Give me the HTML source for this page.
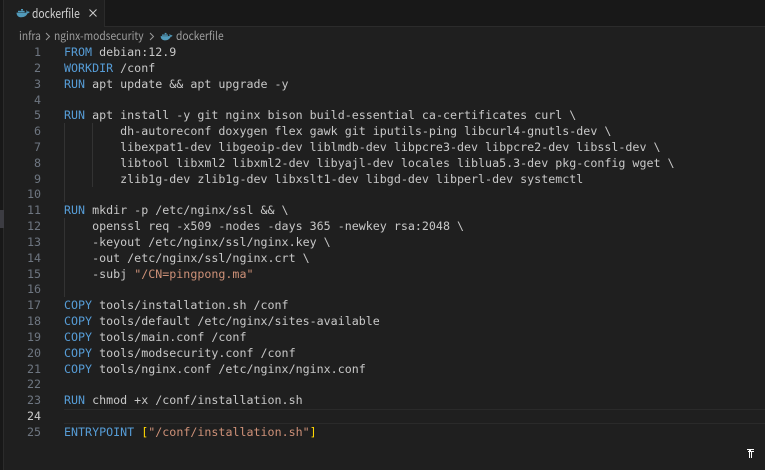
<!DOCTYPE html>
<html><head><meta charset="utf-8"><style>
html,body{margin:0;padding:0;width:765px;height:470px;overflow:hidden;background:#1f1f1f}
*{box-sizing:border-box}
#tabbar{position:absolute;left:0;top:0;width:765px;height:27px;background:#181818;border-bottom:1px solid #2b2b2b}
#tab{position:absolute;left:4px;top:0;width:101px;height:27px;background:#1f1f1f;border-right:1px solid #2b2b2b}
#strip{position:absolute;left:0;top:0;width:4px;height:470px;background:#181818;border-right:1px solid #2b2b2b}
#thumb{position:absolute;left:0;top:210px;width:4px;height:18px;background:#3c3c42}
.ui{position:absolute;font-family:"Noto Sans CJK JP","Liberation Sans",sans-serif;white-space:pre;transform-origin:0 0;filter:blur(.3px)}
#tabt{left:32px;top:4px;font-size:12.4px;line-height:18px;color:#d0d0d0;transform:scaleX(.83)}
.bc{top:27px;font-size:11.4px;line-height:18px;color:#9d9d9d;transform:scaleX(.9)}
.ln,.c{position:absolute;font-family:"DejaVu Sans Mono",monospace;font-size:11.66px;line-height:16px;height:16px;white-space:pre;color:#c8c8c8;filter:blur(.25px)}
.ln{left:19px;width:22px;text-align:right;color:#6e7681}
.c{left:64px}
.k{color:#569cd6}.s{color:#ce9178}.b{color:#ffd700}
.g{position:absolute;width:1px;background:#333}
#cur{position:absolute;left:64px;top:409px;width:701px;height:15px;border-top:1px solid #2a2a2a;border-bottom:1px solid #2a2a2a}
</style></head><body>
<div id="tabbar"></div><div id="tab"></div>
<div id="strip"></div><div id="thumb"></div>

<svg style="position:absolute;left:16px;top:8px" width="14" height="10" viewBox="0 0 14 10"><path d="M0.5 4.6H10.2C10.6 3.9 10.6 3 10 2.2C10.8 2.2 11.4 2.8 11.6 3.6C12.4 3.3 13.1 3.5 13.7 4C13.2 5 12.3 5.3 11.6 5.3C10.6 7.9 8.4 9.3 5.3 9.3C2.2 9.3 0.6 7.4 0.5 4.6Z" fill="#519aba"/><rect x="2" y="2.8" width="6.6" height="1.4" fill="#519aba"/><rect x="5" y="1" width="2" height="1.5" fill="#519aba"/></svg>
<div class="ui" id="tabt">dockerfile</div>
<svg style="position:absolute;left:88px;top:8px" width="10" height="10" viewBox="0 0 10 10"><path d="M1.5 1.5L8.5 8.5M8.5 1.5L1.5 8.5" stroke="#cccccc" stroke-width="1" fill="none"/></svg>

<div class="ui bc" style="left:19px">infra</div>
<svg style="position:absolute;left:45px;top:32px" width="6" height="9" viewBox="0 0 6 9"><path d="M1 1L4.5 4.5L1 8" stroke="#9a9a9a" stroke-width="1" fill="none"/></svg>
<div class="ui bc" style="left:54px">nginx-modsecurity</div>
<svg style="position:absolute;left:149px;top:32px" width="6" height="9" viewBox="0 0 6 9"><path d="M1 1L4.5 4.5L1 8" stroke="#9a9a9a" stroke-width="1" fill="none"/></svg>
<svg style="position:absolute;left:160px;top:32px" width="13" height="9" viewBox="0 0 14 10"><path d="M0.5 4.6H10.2C10.6 3.9 10.6 3 10 2.2C10.8 2.2 11.4 2.8 11.6 3.6C12.4 3.3 13.1 3.5 13.7 4C13.2 5 12.3 5.3 11.6 5.3C10.6 7.9 8.4 9.3 5.3 9.3C2.2 9.3 0.6 7.4 0.5 4.6Z" fill="#519aba"/><rect x="2" y="2.8" width="6.6" height="1.4" fill="#519aba"/><rect x="5" y="1" width="2" height="1.5" fill="#519aba"/></svg>
<div class="ui bc" style="left:176px">dockerfile</div>

<div id="cur"></div>
<div class="g" style="left:64px;top:123px;height:79px"></div>
<div class="g" style="left:92px;top:123px;height:64px"></div>
<div class="g" style="left:64px;top:218px;height:79px"></div>

<div class="ln" style="top:44px">1</div><div class="c" style="top:44px"><span class="k">FROM</span> debian:12.9</div>
<div class="ln" style="top:60px">2</div><div class="c" style="top:60px"><span class="k">WORKDIR</span> /conf</div>
<div class="ln" style="top:76px">3</div><div class="c" style="top:76px"><span class="k">RUN</span> apt update &amp;&amp; apt upgrade -y</div>
<div class="ln" style="top:92px">4</div>
<div class="ln" style="top:107px">5</div><div class="c" style="top:107px"><span class="k">RUN</span> apt install -y git nginx bison build-essential ca-certificates curl \</div>
<div class="ln" style="top:123px">6</div><div class="c" style="top:123px">        dh-autoreconf doxygen flex gawk git iputils-ping libcurl4-gnutls-dev \</div>
<div class="ln" style="top:139px">7</div><div class="c" style="top:139px">        libexpat1-dev libgeoip-dev liblmdb-dev libpcre3-dev libpcre2-dev libssl-dev \</div>
<div class="ln" style="top:155px">8</div><div class="c" style="top:155px">        libtool libxml2 libxml2-dev libyajl-dev locales liblua5.3-dev pkg-config wget \</div>
<div class="ln" style="top:171px">9</div><div class="c" style="top:171px">        zlib1g-dev zlib1g-dev libxslt1-dev libgd-dev libperl-dev systemctl</div>
<div class="ln" style="top:186px">10</div>
<div class="ln" style="top:202px">11</div><div class="c" style="top:202px"><span class="k">RUN</span> mkdir -p /etc/nginx/ssl &amp;&amp; \</div>
<div class="ln" style="top:218px">12</div><div class="c" style="top:218px">    openssl req -x509 -nodes -days 365 -newkey rsa:2048 \</div>
<div class="ln" style="top:234px">13</div><div class="c" style="top:234px">    -keyout /etc/nginx/ssl/nginx.key \</div>
<div class="ln" style="top:250px">14</div><div class="c" style="top:250px">    -out /etc/nginx/ssl/nginx.crt \</div>
<div class="ln" style="top:266px">15</div><div class="c" style="top:266px">    -subj <span class="s">"/CN=pingpong.ma"</span></div>
<div class="ln" style="top:281px">16</div>
<div class="ln" style="top:297px">17</div><div class="c" style="top:297px"><span class="k">COPY</span> tools/installation.sh /conf</div>
<div class="ln" style="top:313px">18</div><div class="c" style="top:313px"><span class="k">COPY</span> tools/default /etc/nginx/sites-available</div>
<div class="ln" style="top:329px">19</div><div class="c" style="top:329px"><span class="k">COPY</span> tools/main.conf /conf</div>
<div class="ln" style="top:345px">20</div><div class="c" style="top:345px"><span class="k">COPY</span> tools/modsecurity.conf /conf</div>
<div class="ln" style="top:361px">21</div><div class="c" style="top:361px"><span class="k">COPY</span> tools/nginx.conf /etc/nginx/nginx.conf</div>
<div class="ln" style="top:376px">22</div>
<div class="ln" style="top:392px">23</div><div class="c" style="top:392px"><span class="k">RUN</span> chmod +x /conf/installation.sh</div>
<div class="ln" style="top:408px;color:#cccccc">24</div>
<div class="ln" style="top:424px">25</div><div class="c" style="top:424px"><span class="k">ENTRYPOINT</span> <span class="b">[</span><span class="s">"/conf/installation.sh"</span><span class="b">]</span></div>

<svg style="position:absolute;left:746px;top:449px" width="9" height="10" viewBox="0 0 9 10" shape-rendering="crispEdges"><path d="M1 0H8V1H5V2H8V3H6V9H5V3H4V9H3V3H2V2H3V1H1Z" fill="#fff"/></svg>
</body></html>
